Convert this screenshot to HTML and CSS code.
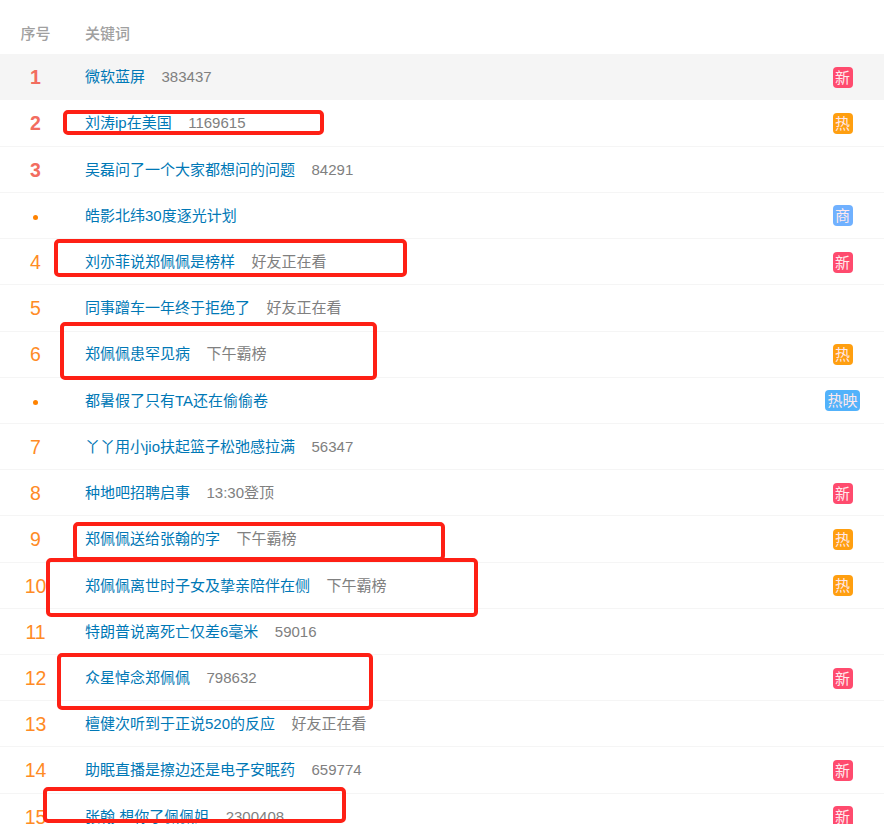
FILE: index.html
```html
<!DOCTYPE html>
<html lang="zh-CN">
<head>
<meta charset="utf-8">
<title>热搜榜</title>
<link rel="stylesheet" href="styles.css">
</head>
<body>
<main class="board">
  <div class="head"><span class="c-rank">序号</span><span class="c-word">关键词</span></div>
  <ol class="list">
    <li class="row current"><span class="c-rank top">1</span><span class="c-word"><a>微软蓝屏</a><em>383437</em></span><span class="c-tag"><i class="tag new">新</i></span></li>
    <li class="row"><span class="c-rank top">2</span><span class="c-word"><a>刘涛ip在美国</a><em>1169615</em></span><span class="c-tag"><i class="tag hot">热</i></span></li>
    <li class="row"><span class="c-rank top">3</span><span class="c-word"><a>吴磊问了一个大家都想问的问题</a><em>84291</em></span><span class="c-tag"></span></li>
    <li class="row"><span class="c-rank dot"></span><span class="c-word"><a>皓影北纬30度逐光计划</a></span><span class="c-tag"><i class="tag biz">商</i></span></li>
    <li class="row"><span class="c-rank">4</span><span class="c-word"><a>刘亦菲说郑佩佩是榜样</a><em>好友正在看</em></span><span class="c-tag"><i class="tag new">新</i></span></li>
    <li class="row"><span class="c-rank">5</span><span class="c-word"><a>同事蹭车一年终于拒绝了</a><em>好友正在看</em></span><span class="c-tag"></span></li>
    <li class="row"><span class="c-rank">6</span><span class="c-word"><a>郑佩佩患罕见病</a><em>下午霸榜</em></span><span class="c-tag"><i class="tag hot">热</i></span></li>
    <li class="row"><span class="c-rank dot"></span><span class="c-word"><a>都暑假了只有TA还在偷偷卷</a></span><span class="c-tag"><i class="tag film">热映</i></span></li>
    <li class="row"><span class="c-rank">7</span><span class="c-word"><a>丫丫用小jio扶起篮子松弛感拉满</a><em>56347</em></span><span class="c-tag"></span></li>
    <li class="row"><span class="c-rank">8</span><span class="c-word"><a>种地吧招聘启事</a><em>13:30登顶</em></span><span class="c-tag"><i class="tag new">新</i></span></li>
    <li class="row"><span class="c-rank">9</span><span class="c-word"><a>郑佩佩送给张翰的字</a><em>下午霸榜</em></span><span class="c-tag"><i class="tag hot">热</i></span></li>
    <li class="row"><span class="c-rank">10</span><span class="c-word"><a>郑佩佩离世时子女及挚亲陪伴在侧</a><em>下午霸榜</em></span><span class="c-tag"><i class="tag hot">热</i></span></li>
    <li class="row"><span class="c-rank">11</span><span class="c-word"><a>特朗普说离死亡仅差6毫米</a><em>59016</em></span><span class="c-tag"></span></li>
    <li class="row"><span class="c-rank">12</span><span class="c-word"><a>众星悼念郑佩佩</a><em>798632</em></span><span class="c-tag"><i class="tag new">新</i></span></li>
    <li class="row"><span class="c-rank">13</span><span class="c-word"><a>檀健次听到于正说520的反应</a><em>好友正在看</em></span><span class="c-tag"></span></li>
    <li class="row"><span class="c-rank">14</span><span class="c-word"><a>助眠直播是擦边还是电子安眠药</a><em>659774</em></span><span class="c-tag"><i class="tag new">新</i></span></li>
    <li class="row"><span class="c-rank">15</span><span class="c-word"><a>张翰 想你了佩佩姐</a><em>2300408</em></span><span class="c-tag"><i class="tag new">新</i></span></li>
  </ol>
  <div class="mark m1"></div>
  <div class="mark m2"></div>
  <div class="mark m3"></div>
  <div class="mark m4"></div>
  <div class="mark m5"></div>
  <div class="mark m6"></div>
  <div class="mark m7"></div>
</main>
</body>
</html>
```

FILE: styles.css
```css
html, body {
  margin: 0;
  padding: 0;
  background: #fff;
}
body {
  height: 824px;
  overflow: hidden;
  font-family: "Liberation Sans", "Noto Sans CJK SC", sans-serif;
  font-size: 15px;
}
.board {
  position: relative;
  width: 884px;
  height: 824px;
  overflow: hidden;
}
.head {
  display: flex;
  align-items: center;
  height: 54.2px;
  padding-top: 14px;
  box-sizing: border-box;
  line-height: 26px;
}
.head .c-rank,
.head .c-word {
  flex: none;
  font-size: 15px;
  font-weight: 500;
  color: #a0a0a0;
}
.list {
  list-style: none;
  margin: 0;
  padding: 0;
}
.row {
  display: flex;
  align-items: center;
  height: 46.23px;
  padding-top: 0.76px;
  box-sizing: border-box;
  border-bottom: 1px solid #f5f5f5;
}
.current {
  background: #f5f5f5;
}
.c-rank {
  flex: none;
  width: 71px;
  text-align: center;
  font-size: 19.5px;
  color: #ff8b25;
  line-height: 24px;
}
.top {
  color: #f26d5f;
  font-weight: 700;
}
.dot::before {
  content: "";
  display: inline-block;
  width: 5px;
  height: 5px;
  border-radius: 50%;
  background: #ff8200;
  vertical-align: 3px;
}
.c-word {
  flex: 1;
  margin-left: 14px;
  white-space: nowrap;
  line-height: 20px;
}
.c-word a {
  color: #0078b6;
}
.c-word em {
  font-style: normal;
  color: #808080;
  margin-left: 16.5px;
}
.c-tag {
  flex: none;
  width: 82px;
  text-align: center;
  padding-right: 1px;
  box-sizing: border-box;
}
.tag {
  display: inline-block;
  min-width: 20px;
  height: 21px;
  padding: 0 1px;
  box-sizing: border-box;
  border-radius: 4px;
  color: #ffe9ec;
  font-style: normal;
  font-size: 15px;
  line-height: 21px;
  text-align: center;
  vertical-align: middle;
}
.new { background: #ff4b6e; }
.hot { background: #ff9f10; }
.biz { background: #70b1ff; }
.film { background: #52b2fb; padding: 0 2px; }
.mark {
  position: absolute;
  box-sizing: border-box;
  border: 4px solid #fe2015;
  border-radius: 5px;
  pointer-events: none;
}
.m1 { left: 63px; top: 110px; width: 261px; height: 25px; }
.m2 { left: 54px; top: 239px; width: 353px; height: 38px; }
.m3 { left: 60px; top: 322px; width: 317px; height: 58px; }
.m4 { left: 73px; top: 522px; width: 372px; height: 39px; }
.m5 { left: 46px; top: 558px; width: 432px; height: 59px; }
.m6 { left: 57px; top: 653px; width: 316px; height: 57px; }
.m7 { left: 43px; top: 787px; width: 303px; height: 36px; }
```
